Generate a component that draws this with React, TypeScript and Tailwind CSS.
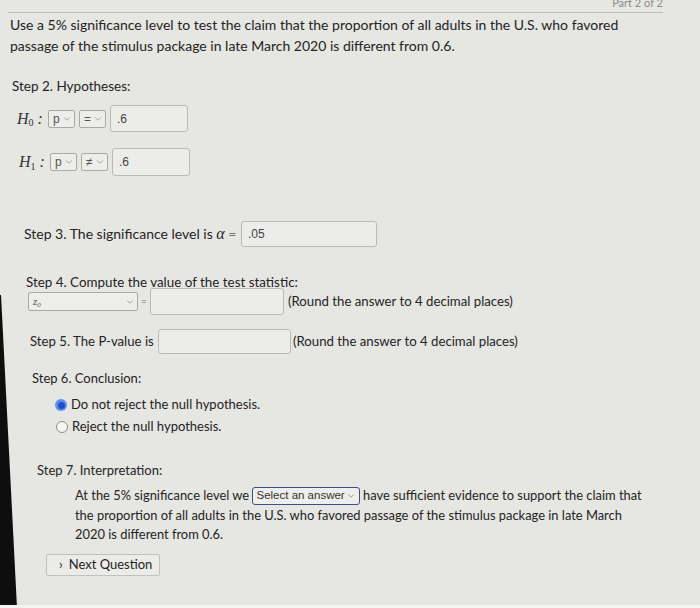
import { ChevronDown } from "lucide-react";

function MiniSelect({ label, width }: { label: string; width: string }) {
  return (
    <div
      className={`flex h-[18px] ${width} items-center justify-between rounded-[2px] border border-[#a9a9a6] bg-[#ededeb] pl-[4px] pr-[2px] font-['Liberation_Sans',sans-serif] text-[12px] text-[#555]`}
    >
      <span className="leading-none">{label}</span>
      <ChevronDown size={10} strokeWidth={1.5} className="text-[#777]" />
    </div>
  );
}

function Field({ value, className }: { value?: string; className: string }) {
  return (
    <div
      className={`flex items-center rounded-[3px] border border-[#b9b9b6] bg-[#ececea] pl-[6px] font-['Liberation_Sans',sans-serif] text-[12px] text-[#444] ${className}`}
    >
      {value}
    </div>
  );
}

export default function App() {
  return (
    <div className="relative h-[608px] w-[700px] overflow-hidden bg-[#e6e6e3] font-['Lato',sans-serif] text-[14px] text-[#242424]">
      {/* top rule */}
      <div className="ml-[8px] flex h-[13px] w-[655px] items-end justify-end border-b border-[#bdbdb9] pb-[4px]">
        <span className="text-[11px] leading-none text-[#8c8c8a]">Part 2 of 2</span>
      </div>

      <p className="ml-[10px] mt-[1px] whitespace-nowrap leading-[21px]">
        Use a 5% significance level to test the claim that the proportion of all adults in the U.S. who favored
        <br />
        passage of the stimulus package in late March 2020 is different from 0.6.
      </p>

      <p className="ml-[12px] mt-[20px] text-[13.5px] leading-[20px]">Step 2. Hypotheses:</p>

      {/* H0 */}
      <div className="ml-[17px] mt-[9px] flex h-[27px] items-center">
        <span className="w-[31px] font-['Liberation_Serif',serif] text-[16px] italic text-[#333]">
          H<sub className="text-[10px] not-italic">0</sub> :
        </span>
        <MiniSelect label="p" width="w-[27px]" />
        <div className="w-[4px]" />
        <MiniSelect label="=" width="w-[27px]" />
        <div className="w-[4px]" />
        <Field value=".6" className="h-[27px] w-[78px]" />
      </div>

      {/* H1 */}
      <div className="ml-[19px] mt-[16px] flex h-[28px] items-center">
        <span className="w-[31px] font-['Liberation_Serif',serif] text-[16px] italic text-[#333]">
          H<sub className="text-[10px] not-italic">1</sub> :
        </span>
        <MiniSelect label="p" width="w-[27px]" />
        <div className="w-[4px]" />
        <MiniSelect label="≠" width="w-[27px]" />
        <div className="w-[4px]" />
        <Field value=".6" className="h-[28px] w-[78px]" />
      </div>

      {/* Step 3 */}
      <div className="ml-[24px] mt-[45px] flex h-[26px] items-center">
        <span className="w-[217px] whitespace-nowrap">
          Step 3. The significance level is{" "}
          <span className="font-['Liberation_Serif',serif] text-[16px] italic">α</span>{" "}
          <span className="text-[#777]">=</span>
        </span>
        <Field value=".05" className="h-[26px] w-[136px]" />
      </div>

      {/* Step 4 */}
      <p className="ml-[26px] mt-[26px] text-[13.4px] leading-[18px]">
        Step 4. Compute the value of the test statistic:
      </p>
      <div className="ml-[28px] mt-[-3px] flex h-[27px] items-center">
        <div className="flex h-[19px] w-[110px] items-center justify-between rounded-[2px] border border-[#a9a9a6] bg-[#ededeb] pl-[4px] pr-[2px] text-[#555]">
          <span className="font-['Liberation_Serif',serif] text-[11px] italic leading-none">
            z<sub className="text-[7px]">0</sub>
          </span>
          <ChevronDown size={10} strokeWidth={1.5} className="text-[#777]" />
        </div>
        <span className="w-[12px] text-center text-[10px] text-[#777]">=</span>
        <Field className="h-[27px] w-[134px]" />
        <span className="ml-[4px] whitespace-nowrap text-[13.2px]">(Round the answer to 4 decimal places)</span>
      </div>

      {/* Step 5 */}
      <div className="ml-[30px] mt-[14px] flex h-[25px] items-center">
        <span className="w-[128px] whitespace-nowrap text-[13.2px]">Step 5. The P-value is</span>
        <Field className="h-[25px] w-[133px]" />
        <span className="ml-[2px] whitespace-nowrap text-[13.2px]">(Round the answer to 4 decimal places)</span>
      </div>

      {/* Step 6 */}
      <p className="ml-[32px] mt-[14px] text-[13px] leading-[20px]">Step 6. Conclusion:</p>
      <div className="ml-[55px] mt-[6px] flex h-[22px] items-center text-[13px]">
        <span className="mr-[4px] flex h-[12px] w-[12px] items-center justify-center rounded-full bg-[#5d8ff0]">
          <span className="h-[7px] w-[7px] rounded-full bg-[#1f4fc6]" />
        </span>
        Do not reject the null hypothesis.
      </div>
      <div className="ml-[56px] flex h-[22px] items-center text-[13px]">
        <span className="mr-[4px] h-[12px] w-[12px] rounded-full border border-[#8f8f8c] bg-[#f6f6f4]" />
        Reject the null hypothesis.
      </div>

      {/* Step 7 */}
      <p className="ml-[37px] mt-[22px] text-[13px] leading-[20px]">Step 7. Interpretation:</p>
      <p className="ml-[75px] mt-[6px] whitespace-nowrap text-[12.9px] leading-[19.5px]">
        At the 5% significance level we{" "}
        <span className="inline-flex h-[18px] translate-y-[-1px] items-center gap-[1px] rounded-[3px] border-[1.5px] border-[#3f4f86] bg-[#eeeeec] px-[3px] align-middle font-['Liberation_Sans',sans-serif] text-[11.5px] leading-none text-[#333]">
          Select an answer
          <ChevronDown size={10} strokeWidth={1.5} className="text-[#666]" />
        </span>{" "}
        have sufficient evidence to support the claim that
        <br />
        the proportion of all adults in the U.S. who favored passage of the stimulus package in late March
        <br />
        2020 is different from 0.6.
      </p>

      <button className="ml-[46px] mt-[9px] flex h-[22px] w-[114px] items-center gap-[6px] rounded-[2px] border border-[#c0c0bd] bg-[#ebebe9] pl-[12px] text-[13px] text-[#242424]">
        <span className="text-[13px]">›</span> Next Question
      </button>

      {/* photo edge */}
      <div className="absolute bottom-0 left-0 top-[295px] w-[17px] bg-[#0e0e0e] [clip-path:polygon(0_0,6%_0,100%_100%,0_100%)]" />
      <div className="absolute bottom-0 left-0 right-0 h-[3px] bg-[#f4f4f3]" />
    </div>
  );
}
